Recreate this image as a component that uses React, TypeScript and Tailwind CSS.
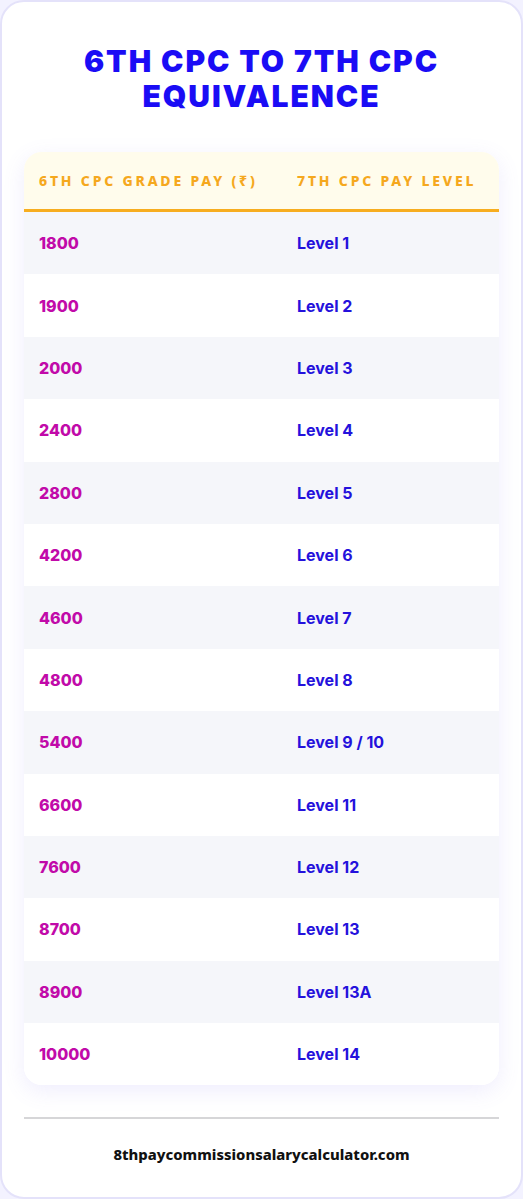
import React from "react";

const rows: [string, string][] = [
  ["1800", "Level 1"],
  ["1900", "Level 2"],
  ["2000", "Level 3"],
  ["2400", "Level 4"],
  ["2800", "Level 5"],
  ["4200", "Level 6"],
  ["4600", "Level 7"],
  ["4800", "Level 8"],
  ["5400", "Level 9 / 10"],
  ["6600", "Level 11"],
  ["7600", "Level 12"],
  ["8700", "Level 13"],
  ["8900", "Level 13A"],
  ["10000", "Level 14"],
];

export default function App() {
  return (
    <div className="w-[523px] h-[1199px] bg-[#f3f2ff]">
      <div className="h-full rounded-[24px] border-2 border-[#e4e2fa] bg-white px-[22px] pt-[42px] flex flex-col">
        <h1
          className="text-center text-[30px] leading-[35px] font-black tracking-[0.065em] text-[#1a0cf5] uppercase"
          style={{ fontFamily: "Inter, 'Noto Sans', sans-serif" }}
        >
          6th CPC to 7th CPC
          <br />
          Equivalence
        </h1>
        <div className="mt-[38px] rounded-[18px] overflow-hidden bg-white shadow-[0_6px_22px_rgba(120,110,240,0.12)]">
          <div
            className="flex h-[60px] items-center bg-[#fffcec] border-b-[3px] border-[#f7ad1f] text-[#f5a81e] text-[14px] font-extrabold tracking-[0.2em] uppercase"
            style={{ fontFamily: "'Noto Sans', sans-serif" }}
          >
            <div className="w-[258px] pl-[15px] whitespace-nowrap">6th CPC Grade Pay (₹)</div>
            <div className="flex-1 pl-[15px] whitespace-nowrap">7th CPC Pay Level</div>
          </div>
          {rows.map(([g, l], i) => (
            <div
              key={g}
              className={`flex h-[62.4px] items-center text-[16px] font-extrabold ${
                i % 2 === 0 ? "bg-[#f5f6fa]" : "bg-white"
              }`}
              style={{ fontFamily: "Inter, sans-serif" }}
            >
              <div className="w-[258px] pl-[15px] text-[#c10aa9]">{g}</div>
              <div className="flex-1 pl-[15px] text-[#2411dc] font-bold">{l}</div>
            </div>
          ))}
        </div>
        <div className="mt-[32px] h-[2px] bg-[#d6d6d8]" />
        <div
          className="mt-[24px] text-center text-[14.8px] font-extrabold text-[#111]"
          style={{ fontFamily: "'Noto Sans', sans-serif" }}
        >
          8thpaycommissionsalarycalculator.com
        </div>
      </div>
    </div>
  );
}
